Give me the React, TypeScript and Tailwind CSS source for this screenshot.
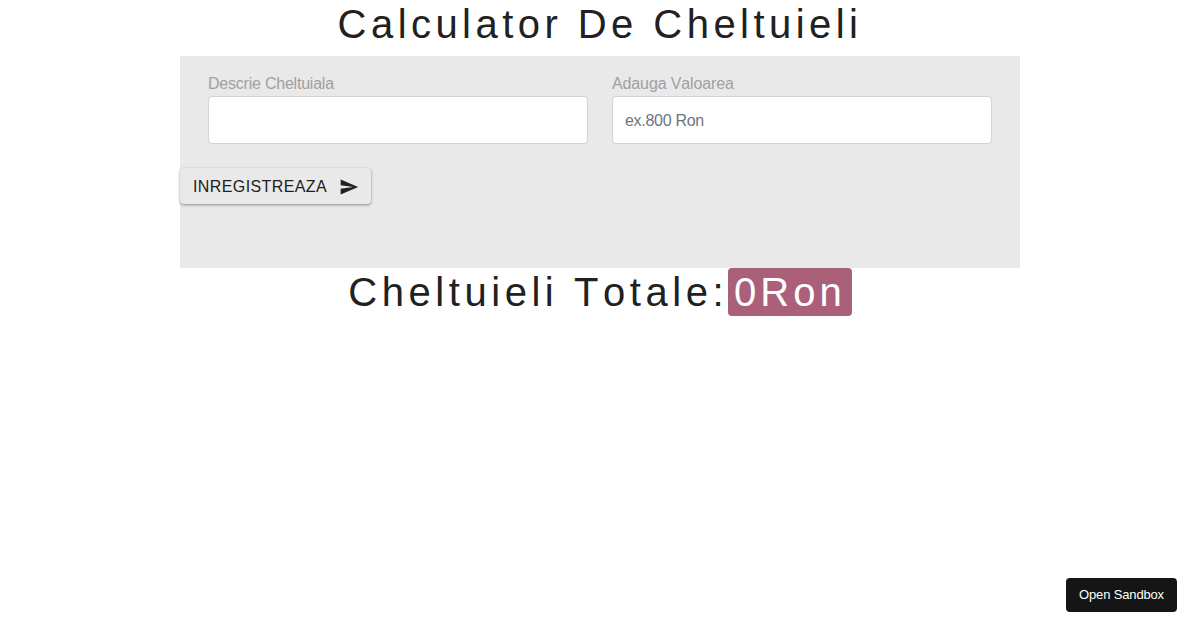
export default function App() {
  return (
    <main className="relative min-h-screen bg-white font-['Liberation_Sans',Arial,sans-serif] text-[#212121] [font-kerning:none]">
      <h1 className="h-14 text-center text-[40px] leading-[48px] font-normal tracking-[4.45px]">
        Calculator De Cheltuieli
      </h1>

      <section className="mx-auto h-[212px] w-[840px] bg-[#e9e9e9]">
        <div className="grid grid-cols-2 gap-6 px-7 pt-4">
          <label className="block text-base leading-6 tracking-[-0.22px] text-[#a0a0a0]">
            Descrie Cheltuiala
            <input
              className="block h-12 w-full rounded border border-[#ced4da] bg-white px-3 text-base text-[#495057] outline-none"
              type="text"
            />
          </label>
          <label className="block text-base leading-6 tracking-[-0.12px] text-[#a0a0a0]">
            Adauga Valoarea
            <input
              className="block h-12 w-full rounded border border-[#ced4da] bg-white px-3 pt-px text-base tracking-[-0.3px] text-[#495057] outline-none placeholder:text-[#6c757d]"
              placeholder="ex.800 Ron"
              type="text"
            />
          </label>
        </div>

        <button
          className="mt-6 flex h-9 w-[191px] items-center gap-3 rounded bg-[#e9e9e9] pt-px pl-[13px] text-base tracking-[0.4px] text-[#212121] shadow-[0_1px_3px_rgba(0,0,0,0.4)]"
          type="button"
        >
          INREGISTREAZA
          <svg className="h-5 w-5" viewBox="0 0 24 24" fill="currentColor">
            <path d="M2.01 21 23 12 2.01 3 2 10l15 2-15 2z" />
          </svg>
        </button>
      </section>

      <h2 className="flex h-12 items-center justify-center text-[40px] leading-[48px] font-normal tracking-[4.55px]">
        Cheltuieli Totale:
        <span className="rounded-sm bg-[#ab6079] px-[6px] tracking-[4px] text-white">0Ron</span>
      </h2>

      <a className="absolute top-[578px] left-[1066px] flex h-[34px] w-[111px] items-center justify-center rounded bg-[#151515] text-[13px] tracking-[-0.15px] text-white">
        Open Sandbox
      </a>
    </main>
  );
}
